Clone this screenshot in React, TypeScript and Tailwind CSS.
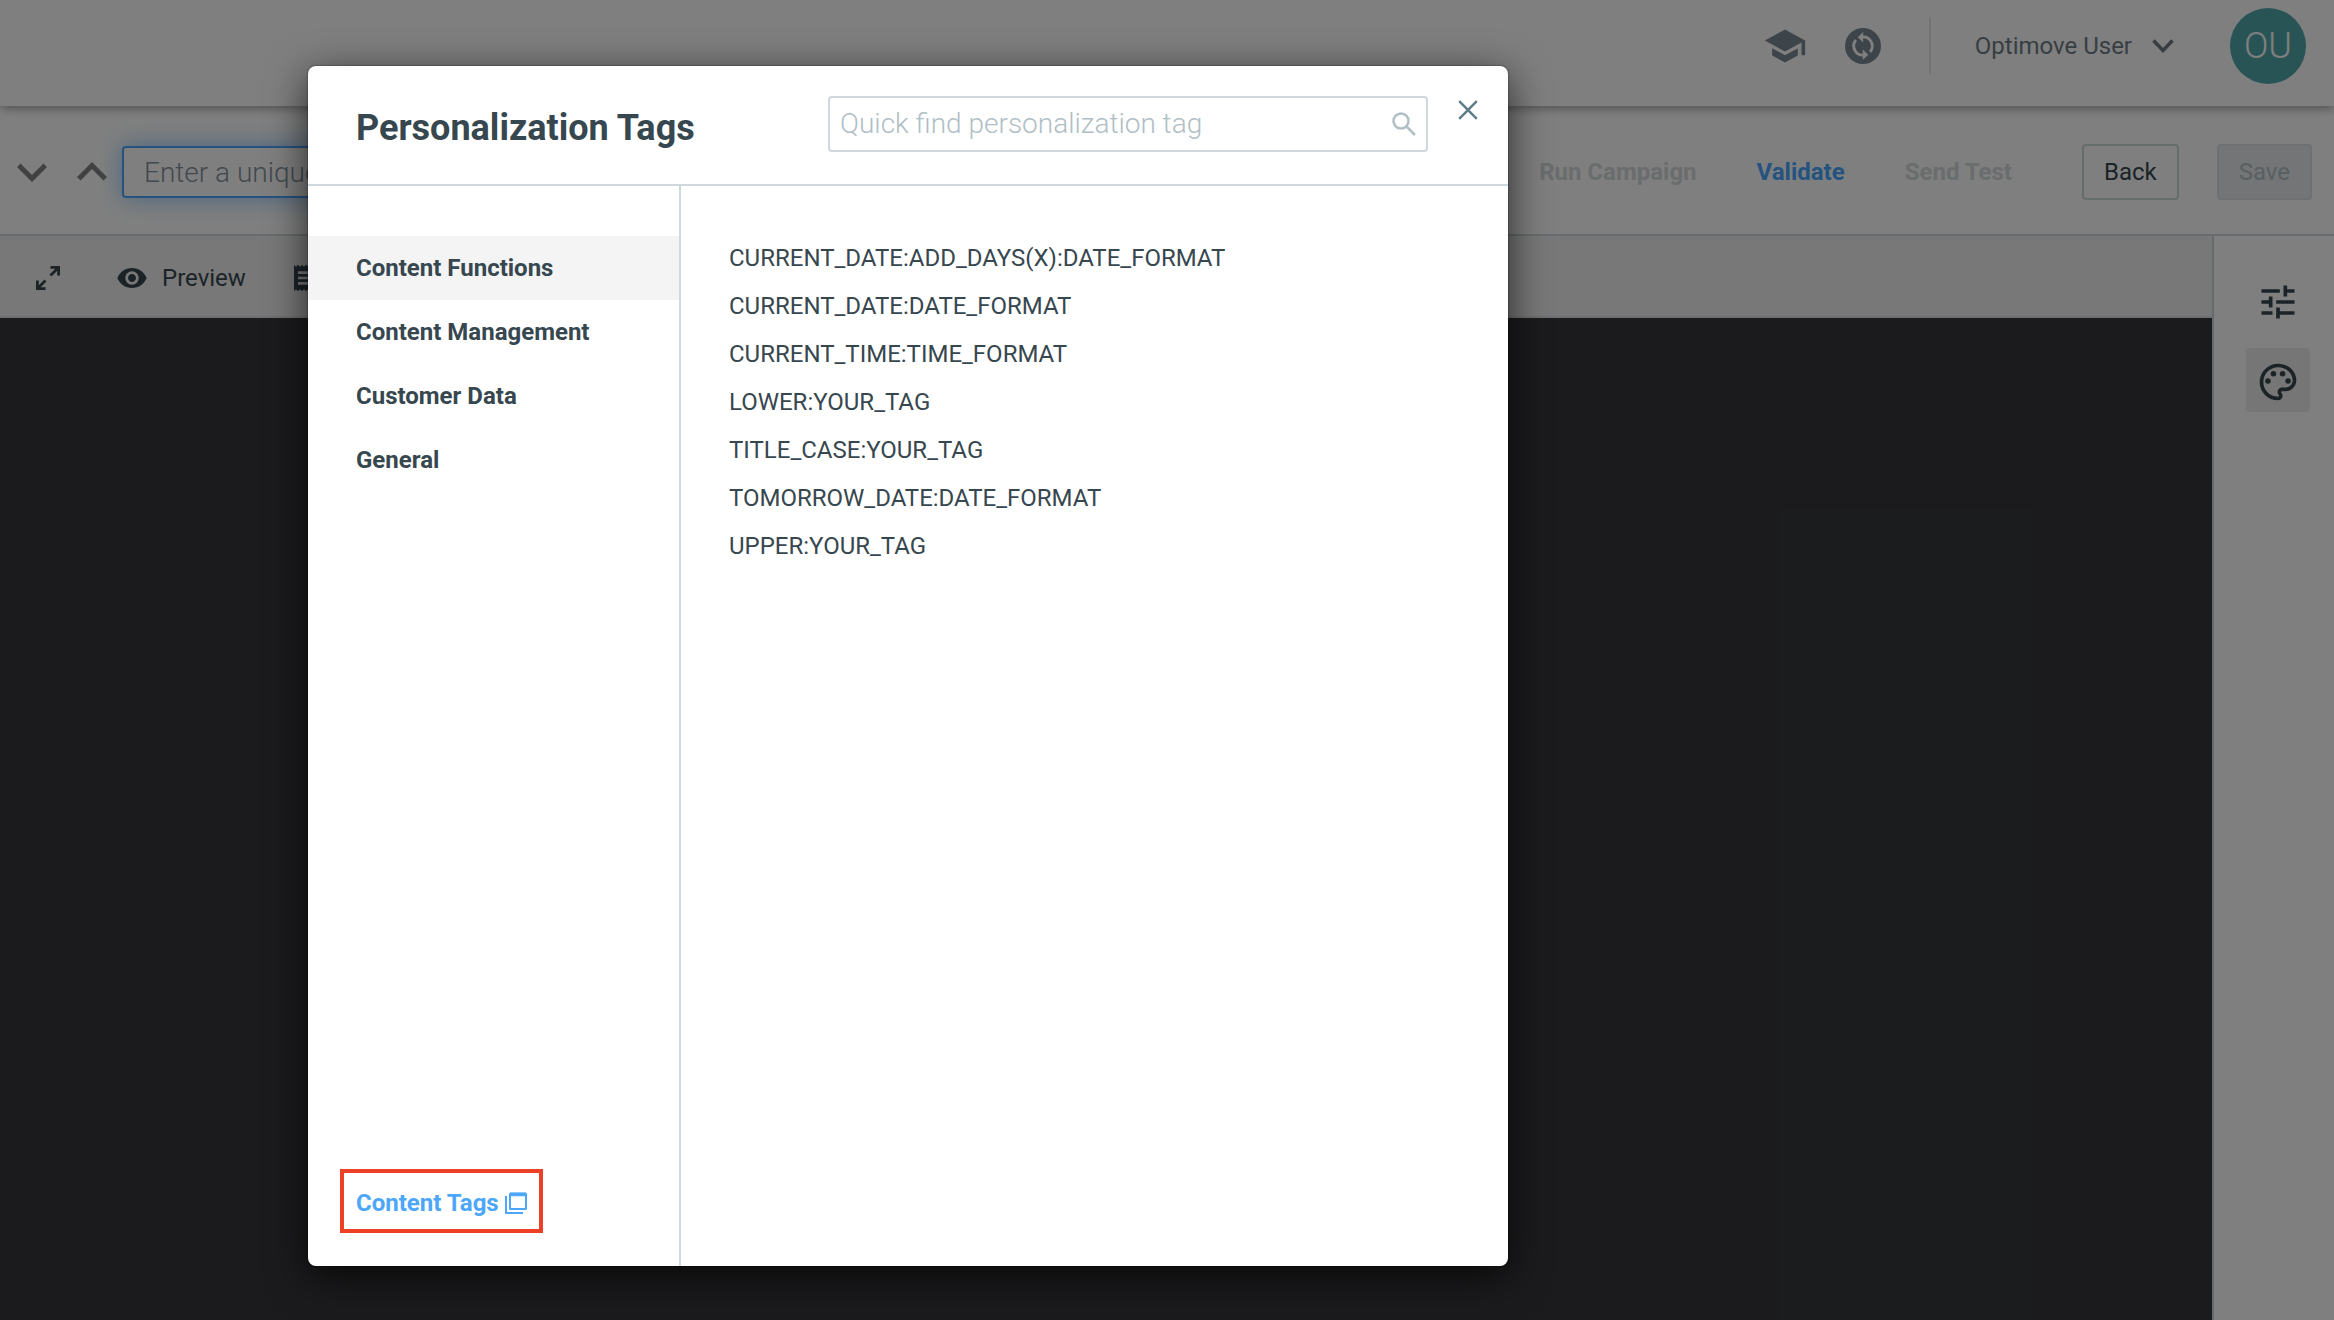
import { ReactNode, useState } from 'react';
import { MdExpandLess, MdExpandMore, MdOutlinePalette, MdReceipt, MdSchool, MdTune, MdVisibility } from 'react-icons/md';

interface TagCategory {
  name: string;
  tags: string[];
}

const categories: TagCategory[] = [
  {
    name: 'Content Functions',
    tags: [
      'CURRENT_DATE:ADD_DAYS(X):DATE_FORMAT',
      'CURRENT_DATE:DATE_FORMAT',
      'CURRENT_TIME:TIME_FORMAT',
      'LOWER:YOUR_TAG',
      'TITLE_CASE:YOUR_TAG',
      'TOMORROW_DATE:DATE_FORMAT',
      'UPPER:YOUR_TAG',
    ],
  },
  { name: 'Content Management', tags: [] },
  { name: 'Customer Data', tags: [] },
  { name: 'General', tags: [] },
];

function SyncCircleIcon() {
  return (
    <svg viewBox="0 0 36 36" className="size-9" aria-hidden="true">
      <circle cx="18" cy="18" r="18" fill="currentColor" />
      <g fill="none" stroke="#fff" strokeWidth="2.800">
        <path d="M17.500 8.800a9.300 9.300 0 0 1 7.600 15.200" />
        <path d="M18.500 27.200a9.300 9.300 0 0 1-7.600-15.200" />
      </g>
      <path d="M18.200 4v10.400L12.800 9.200zM17.800 32v-10.400l5.400 5.200z" fill="#fff" />
    </svg>
  );
}

function ExpandIcon() {
  return (
    <svg viewBox="0 0 24 24" className="size-6" fill="none" stroke="currentColor" strokeWidth="2.800" aria-hidden="true">
      <path d="M14.500 1.400h8.100v8.100M22 2l-7.500 7.500M9.500 22.600H1.400v-8.100M2 22l7.500-7.500" />
    </svg>
  );
}

function TopBar() {
  return (
    <header className="relative z-10 flex h-[106px] shrink-0 items-start justify-end bg-white pt-2 pr-7 text-[#7b8b96] shadow-[0_2px_10px_rgba(0,0,0,0.4)]">
      <div className="flex h-[76px] items-center">
        <button aria-label="Academy" className="mr-[38px]">
          <MdSchool className="size-11" />
        </button>
        <button aria-label="Refresh" className="mr-12">
          <SyncCircleIcon />
        </button>
        <div className="mr-11 h-14 w-0.5 bg-[#e6e6e6]" />
        <button className="mr-14 flex items-center gap-5 text-2xl text-[#6e7d87]">
          Optimove User
          <svg viewBox="0 0 22 14" className="h-3.5 w-[22px]" fill="none" stroke="currentColor" strokeWidth="3.500" aria-hidden="true">
            <path d="M1.500 1.500 11 11.500l9.500-10" />
          </svg>
        </button>
        <div className="flex size-[76px] items-center justify-center rounded-full bg-[#50a8ab] text-4xl font-light text-white">
          OU
        </div>
      </div>
    </header>
  );
}

function CampaignBar() {
  return (
    <div className="flex h-[130px] shrink-0 items-center border-b-2 border-[#cfd8dc] px-[22px] pt-1">
      <div className="flex items-center text-[#838383]">
        <button aria-label="Next" className="-ml-5">
          <MdExpandMore className="size-[60px]" />
        </button>
        <button aria-label="Previous">
          <MdExpandLess className="size-[60px]" />
        </button>
      </div>
      <input
        aria-label="Campaign name"
        placeholder="Enter a unique name"
        className="h-[52px] w-[600px] rounded border-2 border-[#4aa6ff] px-5 text-[28px] font-light shadow-[0_0_24px_rgba(74,166,255,0.6)] outline-none placeholder:text-[#84939d]"
      />
      <div className="ml-auto flex items-center text-2xl">
        <button disabled className="mr-[60px] font-bold text-[#d3dada]">Run Campaign</button>
        <button className="mr-[60px] font-bold text-[#4aa6ff]">Validate</button>
        <button disabled className="mr-[70px] font-bold text-[#d3dada]">Send Test</button>
        <button className="mr-[38px] h-14 rounded border-2 border-[#cbd8d8] px-5 text-[#37474f]">Back</button>
        <button disabled className="h-14 rounded border-2 border-[#dfe0e2] bg-[#e8eaed] px-5 text-[#b0bec5]">Save</button>
      </div>
    </div>
  );
}

function EditorToolbar() {
  return (
    <div className="flex h-[82px] items-center border-b-2 border-[#dcdfe0] bg-[#f0f0f0] pt-1 pl-9 text-2xl text-[#37474f]">
      <button aria-label="Full screen" className="mr-[56px]">
        <ExpandIcon />
      </button>
      <button className="mr-[44px] flex items-center gap-3.5">
        <MdVisibility className="size-8" />
        Preview
      </button>
      <button aria-label="Templates">
        <MdReceipt className="size-8" />
      </button>
    </div>
  );
}

function SideRail() {
  return (
    <aside className="flex w-[122px] flex-col items-center gap-3.5 border-l-2 border-[#cbd8d8] bg-white pt-[34px] pl-2 text-[#37474f]">
      <button aria-label="Settings" className="flex size-16 items-center justify-center rounded">
        <MdTune className="size-11" />
      </button>
      <button aria-label="Theme" className="flex size-16 items-center justify-center rounded bg-[#ececec] pt-1">
        <MdOutlinePalette className="size-11" />
      </button>
    </aside>
  );
}

function ModalHeader() {
  return (
    <div className="flex h-[120px] shrink-0 items-center border-b-2 border-[#cfd8dc] pr-[30px] pb-0.5 pl-12">
      <h2 id="modal-title" className="pt-2 text-4xl font-bold">Personalization Tags</h2>
      <label className="ml-auto flex h-14 w-[600px] items-center rounded border-2 border-[#cfd8dc] px-2.5">
        <input
          type="text"
          aria-label="Quick find personalization tag"
          placeholder="Quick find personalization tag"
          className="min-w-0 flex-1 text-[28px] font-light outline-none placeholder:text-[#b0bec5]"
        />
        <svg viewBox="0 0 24 24" className="size-6 text-[#b0bec5]" fill="none" stroke="currentColor" strokeWidth="2.500" aria-hidden="true">
          <circle cx="9" cy="9" r="7.500" />
          <path d="m14.500 14.500 8.500 8.500" />
        </svg>
      </label>
      <button aria-label="Close" className="mb-7 ml-[30px] text-[#607d8b]">
        <svg viewBox="0 0 20 20" className="size-5" fill="none" stroke="currentColor" strokeWidth="2.500" aria-hidden="true">
          <path d="m1.200 1.200 17.600 17.600M18.800 1.200 1.200 18.800" />
        </svg>
      </button>
    </div>
  );
}

function CategoryItem({ active, onClick, children }: { active: boolean; onClick: () => void; children: ReactNode }) {
  return (
    <button
      onClick={onClick}
      className={`block h-16 w-full pl-12 text-left text-2xl font-bold ${active ? 'bg-[#f4f4f4]' : ''}`}
    >
      {children}
    </button>
  );
}

function PersonalizationModal() {
  const [selected, setSelected] = useState(categories[0]);

  return (
    <section
      role="dialog"
      aria-labelledby="modal-title"
      className="flex w-full max-w-[1200px] flex-col overflow-hidden rounded-lg bg-white text-[#37474f] shadow-[0_10px_40px_rgba(0,0,0,0.7),0_0_2px_rgba(0,0,0,0.6)]"
    >
      <ModalHeader />
      <div className="flex flex-1">
        {/* Categories */}
        <div className="flex w-[373px] shrink-0 flex-col justify-between border-r-2 border-[#cfd8dc] pt-[50px] pb-[33px]">
          <nav>
            {categories.map((category) => (
              <CategoryItem
                key={category.name}
                active={category.name === selected.name}
                onClick={() => setSelected(category)}
              >
                {category.name}
              </CategoryItem>
            ))}
          </nav>
          <a
            href="#content-tags"
            className="ml-8 flex h-16 items-center gap-1.5 self-start border-4 border-[#ec4127] px-3 pt-1 text-2xl font-bold text-[#4ca7fb]"
          >
            Content Tags
            <svg viewBox="0 0 22 22" className="size-[22px]" fill="none" stroke="currentColor" strokeWidth="2" aria-hidden="true">
              <path d="M1 4v17h17" />
              <rect x="5" y="1.500" width="16" height="15.500" rx="0.500" />
              <path d="M5 2.500h16" strokeWidth="3.500" />
            </svg>
          </a>
        </div>

        {/* Tags */}
        <ul className="flex-1 px-12 pt-12 text-2xl">
          {selected.tags.map((tag) => (
            <li key={tag} className="leading-[48px]">{tag}</li>
          ))}
        </ul>
      </div>
    </section>
  );
}

export default function App() {
  return (
    <div className="relative flex min-h-screen flex-col bg-white font-[Roboto,sans-serif]">
      <TopBar />
      <CampaignBar />
      <div className="flex flex-1">
        <main className="flex flex-1 flex-col bg-[#36373b]">
          <EditorToolbar />
        </main>
        <SideRail />
      </div>

      {/* Dimmed backdrop */}
      <div className="absolute inset-0 z-20 flex bg-black/50 pt-[66px] pb-[54px] pl-[308px]">
        <PersonalizationModal />
      </div>
    </div>
  );
}
